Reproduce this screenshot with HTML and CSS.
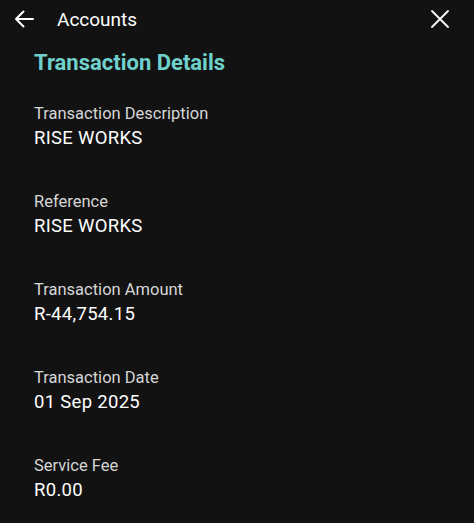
FILE: index.html
```html
<html>

<head>
    <title>
        Transaction Details
    </title>
    <link rel="stylesheet" href="styles.css">
</head>

<body>

    <div class="topbar">
        <span class="back">
            <svg width="20" height="18" viewBox="0 0 20 18">
                <path d="M19 9H2M9.5 1.5L2 9l7.5 7.5" fill="none" stroke="#fff" stroke-width="2" stroke-linecap="round" stroke-linejoin="round"/>
            </svg>
        </span>
        <span class="topbar-title">Accounts</span>
        <span class="close">
            <svg width="20" height="20" viewBox="0 0 20 20">
                <path d="M2 2L18 18M18 2L2 18" fill="none" stroke="#fff" stroke-width="1.8" stroke-linecap="round"/>
            </svg>
        </span>
    </div>

    <div class="content">
        <h1 class="heading">Transaction Details</h1>

        <div class="detail">
            <div class="label">Transaction Description</div>
            <div class="value">RISE WORKS</div>
        </div>

        <div class="detail">
            <div class="label">Reference</div>
            <div class="value">RISE WORKS</div>
        </div>

        <div class="detail">
            <div class="label">Transaction Amount</div>
            <div class="value">R-44,754.15</div>
        </div>

        <div class="detail">
            <div class="label">Transaction Date</div>
            <div class="value">01 Sep 2025</div>
        </div>

        <div class="detail">
            <div class="label">Service Fee</div>
            <div class="value">R0.00</div>
        </div>
    </div>

</body>
</html>
```

FILE: styles.css
```css
body {
    margin: 0;
    background-color: #121212;
    color: #fff;
    font-family: Roboto, "Noto Sans", sans-serif;
}

.topbar {
    display: flex;
    align-items: center;
    height: 38px;
    padding: 0 24px 0 14px;
}

.back {
    display: flex;
    width: 43px;
}

.topbar-title {
    flex: 1;
    font-size: 19px;
}

.close {
    display: flex;
}

.content {
    padding: 0 34px;
}

.heading {
    margin: 12px 0 28px 0;
    color: #6fd0cc;
    font-size: 22px;
    font-weight: 700;
}

.detail {
    height: 88px;
}

.label {
    color: #d6d6d6;
    font-size: 16.5px;
    line-height: 22px;
}

.value {
    font-size: 18.5px;
    line-height: 26px;
    letter-spacing: 0.3px;
}
```
